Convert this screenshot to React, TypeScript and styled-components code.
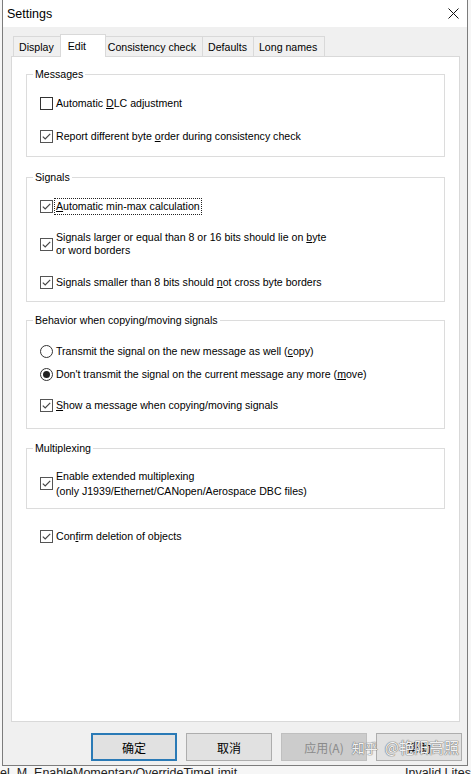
import styled, { createGlobalStyle } from 'styled-components';

const GlobalStyle = createGlobalStyle`
	html, body {
		margin: 0;
		padding: 0;
	}
	body {
		background: #f4f4f4;
		font-family: "Liberation Sans", Arial, sans-serif;
	}
`;

const Desktop = styled.div`
	width: 471px;
	height: 774px;
	overflow: hidden;
	display: flex;
	flex-direction: column;
	background: #f6f6f6;
`;

const Window = styled.div`
	position: relative;
	margin-left: 2px;
	width: 464px;
	height: 765px;
	flex-shrink: 0;
	border: 1px solid #7c7c7c;
	border-top: none;
	background: #f0f0f0;
	display: flex;
	flex-direction: column;
`;

const TitleBar = styled.div`
	height: 27px;
	flex-shrink: 0;
	background: #fff;
	display: flex;
	align-items: center;
	justify-content: space-between;
	padding: 0 8px 0 4px;
	font-size: 12.5px;
	color: #000;
`;

const Body = styled.div`
	flex: 1;
	display: flex;
	flex-direction: column;
	padding: 7px 7px 4px 8px;
	min-height: 0;
`;

const TabStrip = styled.div`
	height: 22px;
	display: flex;
	align-items: flex-end;
	padding-left: 2px;
	position: relative;
	z-index: 1;
`;

const Tab = styled.div<{ $active?: boolean }>`
	box-sizing: border-box;
	height: ${(p) => (p.$active ? '23px' : '20px')};
	min-width: ${(p) => (p.$active ? '46px' : '42px')};
	margin: ${(p) => (p.$active ? '0 -2px -1px -2px' : '0')};
	padding: ${(p) => (p.$active ? '0 7px 1px 7px' : '0 7px 0 5px')};
	position: relative;
	z-index: ${(p) => (p.$active ? 2 : 1)};
	background: ${(p) => (p.$active ? '#fff' : '#f0f0f0')};
	border: 1px solid #d9d9d9;
	border-bottom: none;
	& + & {
		margin-left: ${(p) => (p.$active ? '-2px' : '-1px')};
	}
	display: flex;
	align-items: center;
	font-size: 10.6px;
	color: #000;
	white-space: nowrap;
`;

const Panel = styled.div`
	flex: 1;
	background: #fff;
	border: 1px solid #d9d9d9;
	display: flex;
	flex-direction: column;
	padding: 0 14px;
`;

const Group = styled.fieldset<{ $top: number; $bottom: number }>`
	margin: ${(p) => p.$top}px 0 0 0;
	padding: 0 0 ${(p) => p.$bottom}px 0;
	border: 1px solid #dcdcdc;
	min-width: 0;
`;

const GroupBody = styled.div`
	display: flex;
	flex-direction: column;
	padding: 0 12px 0 13px;
`;

const Legend = styled.legend`
	font-size: 10.6px;
	line-height: 13px;
	padding: 0 2px;
	margin-left: 6px;
	color: #000;
`;

const Row = styled.div<{ $top: number; $h?: number; $indent?: number }>`
	display: flex;
	align-items: center;
	gap: 3px;
	height: ${(p) => p.$h ?? 20}px;
	margin-top: ${(p) => p.$top}px;
	margin-left: ${(p) => p.$indent ?? 0}px;
`;

const Label = styled.span<{ $lh?: number; $focus?: boolean }>`
	font-size: 10.6px;
	line-height: ${(p) => p.$lh ?? 13}px;
	color: #000;
	white-space: nowrap;
	outline: ${(p) => (p.$focus ? '1px dotted #222' : 'none')};
	outline-offset: 1px;
`;

const U = styled.span`
	text-decoration: underline;
	text-underline-offset: 1px;
`;

const Box = styled.span`
	width: 13px;
	height: 13px;
	flex-shrink: 0;
	display: inline-flex;
`;

const ButtonRow = styled.div`
	display: flex;
	justify-content: flex-end;
	gap: 9px;
	margin-top: 11px;
	margin-right: -2px;
`;

const Button = styled.button<{ $default?: boolean }>`
	box-sizing: border-box;
	width: 86px;
	height: 28px;
	font-family: "Noto Sans CJK SC", "Liberation Sans", sans-serif;
	font-size: 12px;
	color: #000;
	background: #e1e1e1;
	border: ${(p) => (p.$default ? '2px solid #2a7ab6' : '1px solid #adadad')};
	padding: 0;
	&:disabled {
		background: #cccccc;
		border-color: #bfbfbf;
		color: #8a8a8a;
	}
`;

const Watermark = styled.div`
	position: absolute;
	right: 8px;
	bottom: 8px;
	display: flex;
	align-items: baseline;
	gap: 7px;
	font-family: "Noto Sans CJK SC", sans-serif;
	color: rgba(255, 255, 255, 0.92);
	text-shadow: 0 0 1px #777, 0 0 1px #777, 0 0 1px #777;
	pointer-events: none;
`;

const WmSite = styled.span`
	font-size: 13px;
`;

const WmUser = styled.span`
	font-size: 15px;
`;

const BackStrip = styled.div`
	height: 9px;
	overflow: hidden;
	display: flex;
	justify-content: space-between;
	font-size: 12.5px;
	line-height: 13px;
	color: #222;
	white-space: nowrap;
	padding-top: 1px;
`;

const CheckBox = ({ checked }: { checked?: boolean }) => (
	<Box>
		<svg width="13" height="13" viewBox="0 0 13 13">
			<rect x="0.5" y="0.5" width="12" height="12" fill="#fff" stroke={checked ? '#555' : '#333'} />
			{checked && (
				<path d="M2.8 6.6 L5.2 9 L10.2 3.8" fill="none" stroke="#444" strokeWidth="1.2" />
			)}
		</svg>
	</Box>
);

const Radio = ({ checked }: { checked?: boolean }) => (
	<Box>
		<svg width="13" height="13" viewBox="0 0 13 13">
			<circle cx="6.5" cy="6.5" r="6" fill="#fff" stroke="#333" />
			{checked && <circle cx="6.5" cy="6.5" r="3.5" fill="#222" />}
		</svg>
	</Box>
);

const CloseIcon = () => (
	<svg width="11" height="11" viewBox="0 0 11 11">
		<path d="M0.5 0.5 L10.5 10.5 M10.5 0.5 L0.5 10.5" stroke="#111" strokeWidth="1" />
	</svg>
);

const App = () => {
	const tabs = ['Display', 'Edit', 'Consistency check', 'Defaults', 'Long names'];

	return (
		<Desktop>
			<GlobalStyle />
			<Window>
				<TitleBar>
					<span>Settings</span>
					<CloseIcon />
				</TitleBar>
				<Body>
					<TabStrip>
						{tabs.map((t) => (
							<Tab key={t} $active={t === 'Edit'}>
								{t}
							</Tab>
						))}
					</TabStrip>
					<Panel>
						<Group $top={10.5} $bottom={10}>
							<Legend>Messages</Legend>
							<GroupBody>
								<Row $top={12.5}>
									<CheckBox />
									<Label>
										Automatic <U>D</U>LC adjustment
									</Label>
								</Row>
								<Row $top={13}>
									<CheckBox checked />
									<Label>
										Report different byte <U>o</U>rder during consistency check
									</Label>
								</Row>
							</GroupBody>
						</Group>

						<Group $top={13.5} $bottom={9}>
							<Legend>Signals</Legend>
							<GroupBody>
								<Row $top={12.5}>
									<CheckBox checked />
									<Label $focus>
										<U>A</U>utomatic min-max calculation
									</Label>
								</Row>
								<Row $top={14} $h={28}>
									<CheckBox checked />
									<Label>
										Signals larger or equal than 8 or 16 bits should lie on <U>b</U>yte
										<br />
										or word borders
									</Label>
								</Row>
								<Row $top={14}>
									<CheckBox checked />
									<Label>
										Signals smaller than 8 bits should <U>n</U>ot cross byte borders
									</Label>
								</Row>
							</GroupBody>
						</Group>

						<Group $top={11.5} $bottom={13}>
							<Legend>Behavior when copying/moving signals</Legend>
							<GroupBody>
								<Row $top={14.5}>
									<Radio />
									<Label>
										Transmit the signal on the new message as well (<U>c</U>opy)
									</Label>
								</Row>
								<Row $top={3}>
									<Radio checked />
									<Label>
										Don't transmit the signal on the current message any more (<U>m</U>ove)
									</Label>
								</Row>
								<Row $top={11}>
									<CheckBox checked />
									<Label>
										<U>S</U>how a message when copying/moving signals
									</Label>
								</Row>
							</GroupBody>
						</Group>

						<Group $top={12.5} $bottom={9}>
							<Legend>Multiplexing</Legend>
							<GroupBody>
								<Row $top={14} $h={30}>
									<CheckBox checked />
									<Label $lh={15}>
										Enable extended multiplexing
										<br />
										(only J1939/Ethernet/CANopen/Aerospace DBC files)
									</Label>
								</Row>
							</GroupBody>
						</Group>

						<Row $top={18} $indent={14}>
							<CheckBox checked />
							<Label>
								Con<U>f</U>irm deletion of objects
							</Label>
						</Row>
					</Panel>
					<ButtonRow>
						<Button $default>确定</Button>
						<Button>取消</Button>
						<Button disabled>应用(A)</Button>
						<Button>帮助</Button>
					</ButtonRow>
				</Body>
				<Watermark>
					<WmSite>知乎</WmSite>
					<WmUser>@艳阳高照</WmUser>
				</Watermark>
			</Window>
			<BackStrip>
				<span>el_M_EnableMomentaryOverrideTimeLimit</span>
				<span>Invalid Lites</span>
			</BackStrip>
		</Desktop>
	);
};

export default App;
